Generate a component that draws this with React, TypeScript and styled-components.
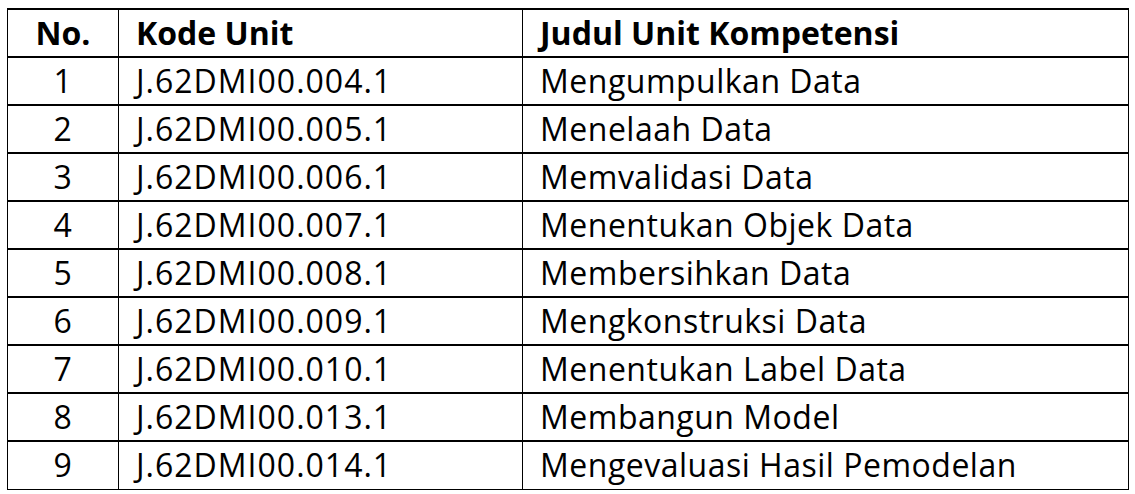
import React from "react";
import styled, { createGlobalStyle } from "styled-components";

const units = [
  ["J.62DMI00.004.1", "Mengumpulkan Data"],
  ["J.62DMI00.005.1", "Menelaah Data"],
  ["J.62DMI00.006.1", "Memvalidasi Data"],
  ["J.62DMI00.007.1", "Menentukan Objek Data"],
  ["J.62DMI00.008.1", "Membersihkan Data"],
  ["J.62DMI00.009.1", "Mengkonstruksi Data"],
  ["J.62DMI00.010.1", "Menentukan Label Data"],
  ["J.62DMI00.013.1", "Membangun Model"],
  ["J.62DMI00.014.1", "Mengevaluasi Hasil Pemodelan"],
];

const GlobalStyle = createGlobalStyle`
  body {
    margin: 0;
    background: #fff;
    font-family: "Open Sans", "Liberation Sans", sans-serif;
    color: #000;
  }
`;

const Page = styled.div`
  padding: 8px 0 0 7px;
`;

const Table = styled.table`
  border-collapse: collapse;
  table-layout: fixed;
  width: 1122px;
  border-left: 1px solid #000;
  border-right: 1px solid #000;
  border-bottom: 1px solid #000;
`;

const Row = styled.tr`
  height: 48px;
  border-top: 2px solid #000;
`;

const Cell = styled.td<{ $center?: boolean; $bold?: boolean; $code?: boolean }>`
  padding: 0 0 0 ${(p) => (p.$center ? 0 : 17)}px;
  text-align: ${(p) => (p.$center ? "center" : "left")};
  font-size: 32px;
  letter-spacing: ${(p) => (p.$bold ? 0 : p.$code ? 1 : 0.5)}px;
  font-weight: ${(p) => (p.$bold ? 700 : 400)};
  line-height: 1;
  border-left: 1px solid #000;
  white-space: nowrap;
  vertical-align: middle;
`;

export default function App() {
  return (
    <Page>
      <GlobalStyle />
      <Table>
        <colgroup>
          <col style={{ width: 111 }} />
          <col style={{ width: 404 }} />
          <col style={{ width: 606 }} />
        </colgroup>
        <tbody>
          <Row>
            <Cell $center $bold>No.</Cell>
            <Cell $bold>Kode Unit</Cell>
            <Cell $bold>Judul Unit Kompetensi</Cell>
          </Row>
          {units.map(([code, title], i) => (
            <Row key={code}>
              <Cell $center>{i + 1}</Cell>
              <Cell $code>{code}</Cell>
              <Cell>{title}</Cell>
            </Row>
          ))}
        </tbody>
      </Table>
    </Page>
  );
}
